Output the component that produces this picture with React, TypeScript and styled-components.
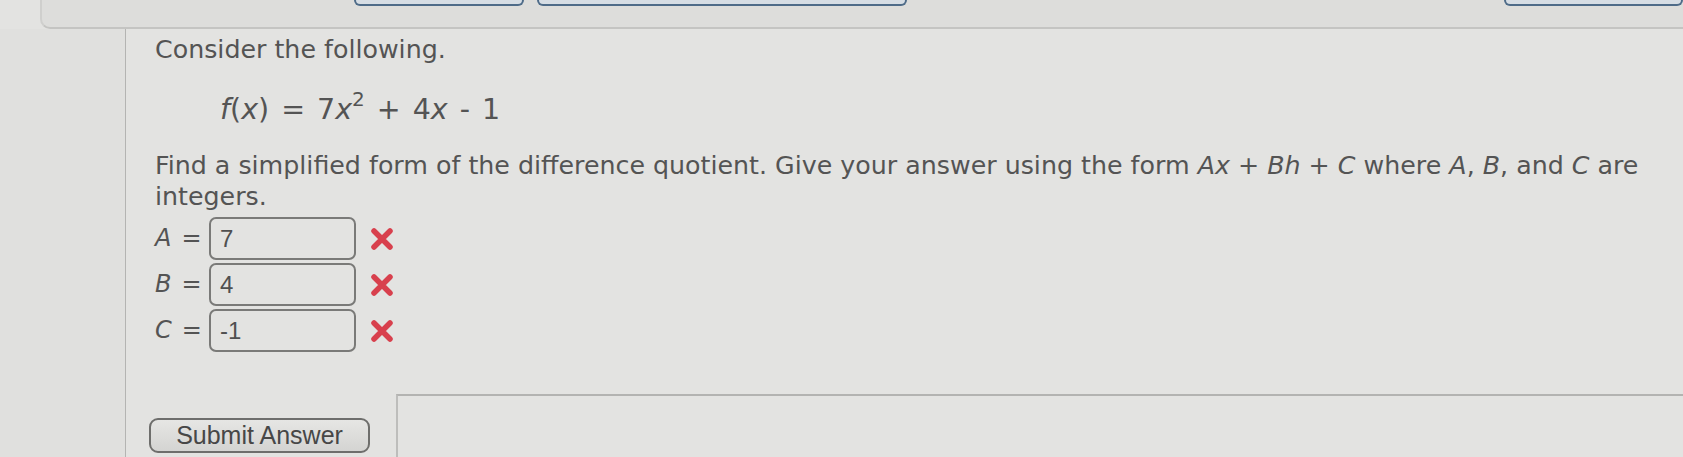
import React from 'react';
import styled, { createGlobalStyle } from 'styled-components';

const GlobalStyle = createGlobalStyle`
    html, body {
        margin: 0;
        padding: 0;
        background-color: #e3e3e1;
        overflow: hidden;
    }
    body {
        font-family: "DejaVu Sans", Verdana, sans-serif;
        color: #545454;
    }
`

const Page = styled.div`
    width: 1683px;
    height: 457px;
    display: flex;
    flex-direction: column;
    overflow: hidden;
`

const TopBar = styled.div`
    flex-shrink: 0;
    height: 27px;
    margin-left: 40px;
    display: flex;
    align-items: flex-start;
    padding-left: 312px;
    background-color: #dddddb;
    border-bottom: 2px solid #c4c4c2;
    border-left: 2px solid #cfcfcd;
    border-bottom-left-radius: 10px;
`

const TabStub = styled.div<{ $width: number; $gap?: number }>`
    flex-shrink: 0;
    width: ${p => p.$width}px;
    margin-left: ${p => p.$gap ?? 0}px;
    height: 4px;
    border: 2px solid #4e6b88;
    border-top: none;
    border-radius: 0 0 6px 6px;
    background-color: #d6dde4;
`

const Spacer = styled.div`
    flex: 1;
`

const Body = styled.div`
    flex: 1;
    display: flex;
    min-height: 0;
`

const Sidebar = styled.div`
    width: 125px;
    flex-shrink: 0;
    border-right: 1px solid #b4b4b2;
    background-color: #e0e0de;
`

const Content = styled.div`
    flex: 1;
    padding: 5px 0 0 29px;
    font-size: 25.3px;
    line-height: 31px;
`

const Line = styled.p<{ $gap?: number }>`
    margin: ${p => p.$gap ?? 0}px 0 0;
    max-width: 1510px;
`

const MathLine = styled.p`
    margin: 29px 0 0 65px;
    font-size: 28.5px;
    line-height: 31px;
    display: flex;
    align-items: baseline;
`

const Op = styled.span`
    margin: 0 12px;
`

const Var = styled.i`
    font-style: italic;
`

const Sup = styled.sup`
    font-size: 20px;
    line-height: 0;
    vertical-align: 13px;
`

const Answers = styled.div`
    margin-top: 5px;
    display: flex;
    flex-direction: column;
    gap: 3px;
`

const AnswerRow = styled.div`
    display: flex;
    align-items: center;
    height: 43px;
`

const Label = styled.span`
    width: 54px;
    font-size: 24px;
    display: flex;
    gap: 10px;
`

const AnswerBox = styled.div`
    width: 134px;
    height: 39px;
    border: 2px solid #7a7a78;
    border-radius: 7px;
    display: flex;
    align-items: center;
    padding-left: 9px;
    font-family: "Liberation Sans", Arial, sans-serif;
    font-size: 24px;
    color: #505050;
`

const Wrong = styled.svg`
    margin-left: 13px;
    width: 26px;
    height: 26px;
`

const Footer = styled.div`
    margin-top: 42px;
    display: flex;
    align-items: flex-start;
`

const SubmitButton = styled.button`
    margin-top: 24px;
    margin-left: -6px;
    width: 221px;
    height: 35px;
    border: 2px solid #6e6e6c;
    border-radius: 9px;
    background: linear-gradient(#e6e6e4, #d4d4d2);
    font-family: "Liberation Sans", Arial, sans-serif;
    font-size: 25px;
    color: #474747;
    padding: 0;
`

const FeedbackPanel = styled.div`
    flex: 1;
    margin-left: 26px;
    height: 80px;
    border-top: 2px solid #b3b3b1;
    border-left: 2px solid #bdbdbb;
`

const answers = [
    { name: 'A', value: '7' },
    { name: 'B', value: '4' },
    { name: 'C', value: '-1' },
]

const WrongMark = () => (
    <Wrong viewBox="0 0 26 26">
        <path d="M5 5 L21 21 M21 5 L5 21" stroke="#d8404d" strokeWidth="5.5" strokeLinecap="round" fill="none" />
    </Wrong>
)

const App: React.FunctionComponent = () => {
    return (
        <Page>
            <GlobalStyle />
            <TopBar>
                <TabStub $width={166} />
                <TabStub $width={366} $gap={13} />
                <Spacer />
                <TabStub $width={175} />
            </TopBar>
            <Body>
                <Sidebar />
                <Content>
                    <Line>Consider the following.</Line>
                    <MathLine>
                        <span><Var>f</Var>(<Var>x</Var>)</span>
                        <Op>=</Op>
                        <span>7<Var>x</Var><Sup>2</Sup></span>
                        <Op>+</Op>
                        <span>4<Var>x</Var></span>
                        <Op>-</Op>
                        <span>1</span>
                    </MathLine>
                    <Line $gap={25}>
                        Find a simplified form of the difference quotient. Give your answer using the form{' '}
                        <Var>Ax</Var> + <Var>Bh</Var> + <Var>C</Var> where <Var>A</Var>, <Var>B</Var>, and{' '}
                        <Var>C</Var> are integers.
                    </Line>
                    <Answers>
                        {answers.map(a => (
                            <AnswerRow key={a.name}>
                                <Label><Var>{a.name}</Var><span>=</span></Label>
                                <AnswerBox>{a.value}</AnswerBox>
                                <WrongMark />
                            </AnswerRow>
                        ))}
                    </Answers>
                    <Footer>
                        <SubmitButton>Submit Answer</SubmitButton>
                        <FeedbackPanel />
                    </Footer>
                </Content>
            </Body>
        </Page>
    )
}

export default App;
